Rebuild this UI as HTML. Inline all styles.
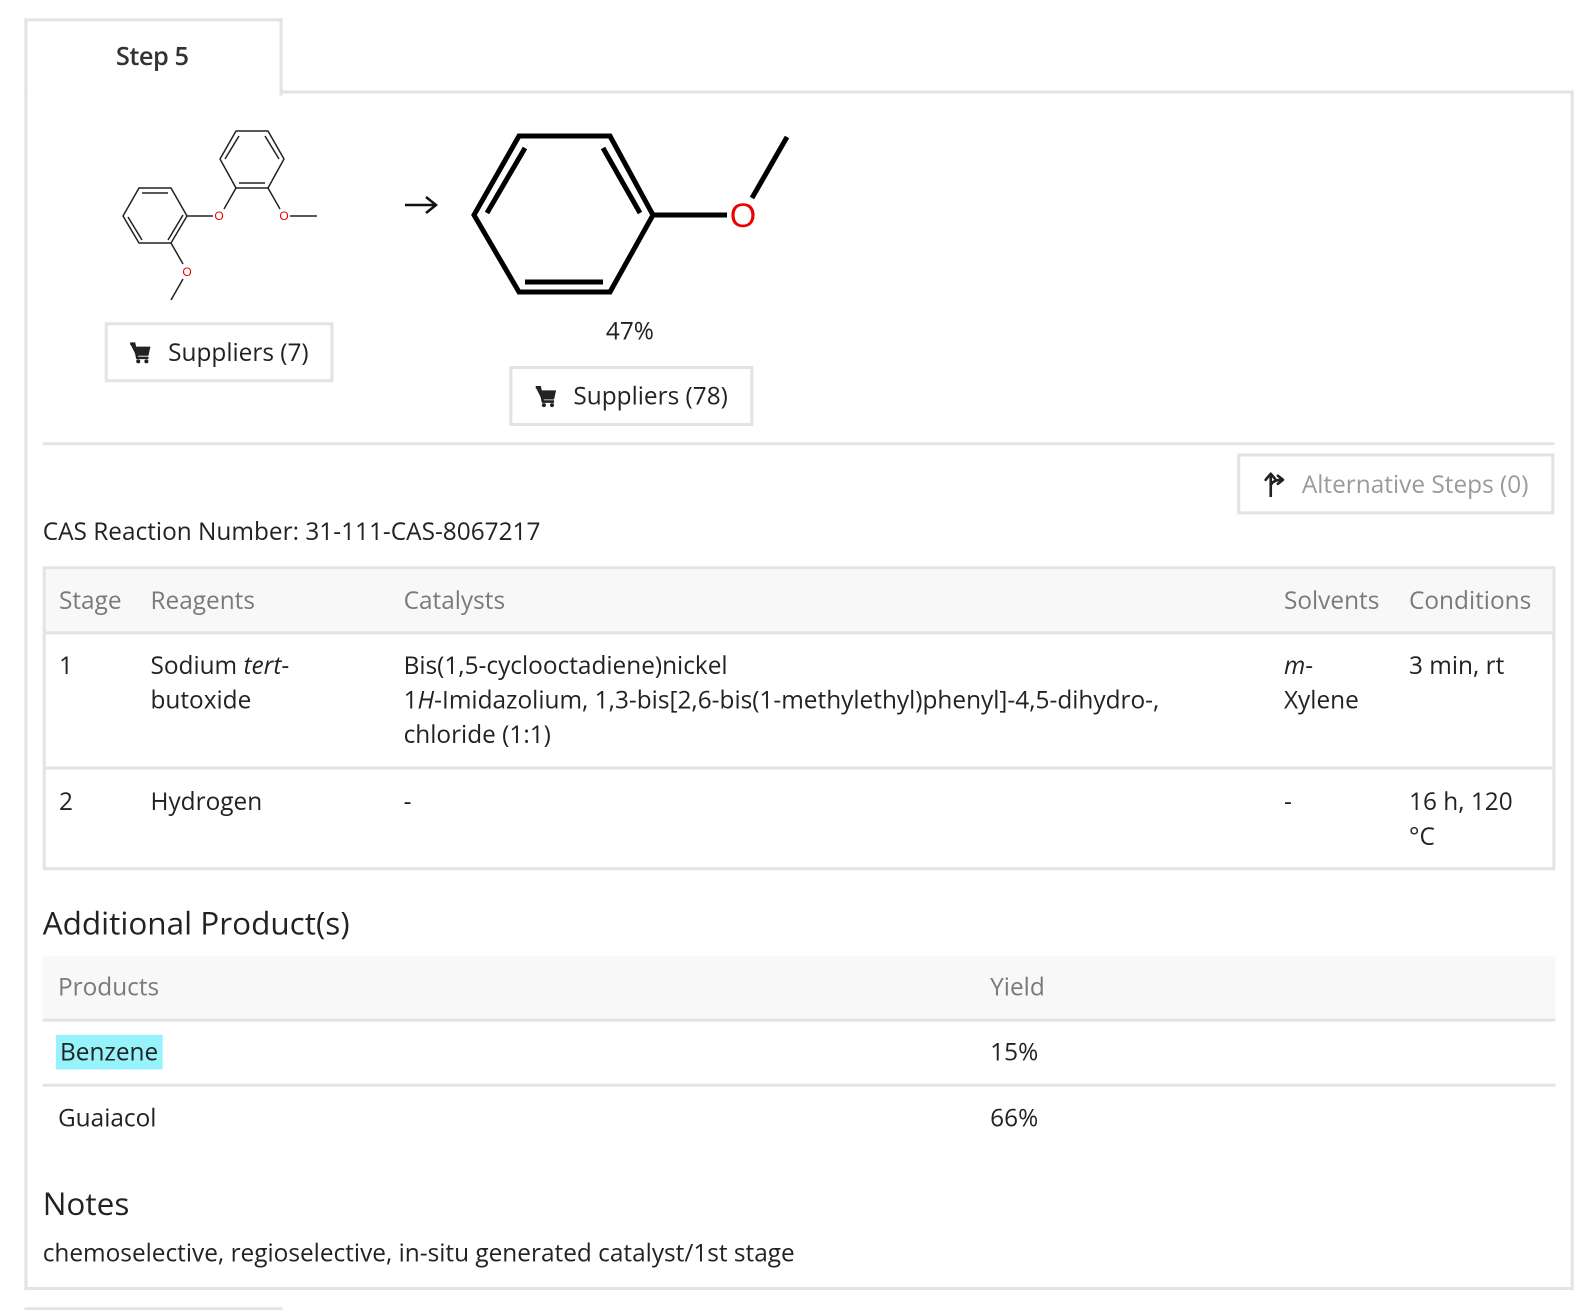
<!DOCTYPE html>
<html><head><meta charset="utf-8"><style>
*{margin:0;padding:0;box-sizing:border-box}
body{width:1594px;height:1310px;background:#fff;overflow:hidden;position:relative;font-family:"Open Sans","Liberation Sans",sans-serif;color:#222}
#w{position:absolute;left:0;top:0;width:1568px;height:1289px;transform:scale(1.0166);transform-origin:0 0}
.a{position:absolute;white-space:nowrap}
.t{font-size:24px;line-height:34px}
.g{color:#7a7a7a}
.b{position:absolute;border:3px solid #e3e3e3}
.btn{position:absolute;border:3px solid #e3e3e3;font-size:24px;display:flex;align-items:center;justify-content:center;gap:16px;background:#fff}
</style></head><body>
<div id="w">
<div class="b" style="left:24px;top:18px;width:254px;height:76px;border-bottom:none"></div>
<div class="b" style="left:24px;top:89px;width:1524px;height:1180px;border-top:none"></div>
<div class="a" style="left:276px;top:89px;width:1272px;height:3px;background:#e3e3e3"></div>
<div class="a" style="left:27px;top:88px;width:248px;height:6px;background:#fff"></div>
<div class="a" style="left:114px;top:38px;font-size:25px;font-weight:600;letter-spacing:-0.5px;color:#333">Step 5</div>

<div class="a t" style="left:596px;top:309px">47%</div>
<div class="btn" style="left:103px;top:317px;width:225px;height:59px"><svg width="22" height="22" viewBox="0 0 22 22"><path d="M1 2h4l1 3h15l-2 9H7z" fill="#222"/><path d="M1 2h4l3 14h11" stroke="#222" stroke-width="2.5" fill="none"/><circle cx="9" cy="19.5" r="2" fill="#222"/><circle cx="17" cy="19.5" r="2" fill="#222"/></svg>Suppliers (7)</div>
<div class="btn" style="left:501px;top:360px;width:240px;height:59px"><svg width="22" height="22" viewBox="0 0 22 22"><path d="M1 2h4l1 3h15l-2 9H7z" fill="#222"/><path d="M1 2h4l3 14h11" stroke="#222" stroke-width="2.5" fill="none"/><circle cx="9" cy="19.5" r="2" fill="#222"/><circle cx="17" cy="19.5" r="2" fill="#222"/></svg>Suppliers (78)</div>

<div class="a" style="left:42px;top:435px;width:1487px;height:3px;background:#e3e3e3"></div>
<div class="btn g" style="left:1217px;top:446px;width:312px;height:60px;color:#9a9a9a"><svg width="22" height="26" viewBox="0 0 22 26"><path d="M7 25V4M2 9l5-6 5 6M7 14c2-4 6-5 11-5M14 5l5 4-5 4" stroke="#222" stroke-width="2.6" fill="none" stroke-linecap="round" stroke-linejoin="round"/></svg>Alternative Steps (0)</div>
<div class="a t" style="left:42px;top:506px">CAS Reaction Number: 31-111-CAS-8067217</div>

<div class="b" style="left:42px;top:557px;width:1488px;height:299px"></div>
<div class="a" style="left:45px;top:560px;width:1482px;height:62px;background:#f8f8f8"></div>
<div class="a" style="left:45px;top:621px;width:1482px;height:3px;background:#e3e3e3"></div>
<div class="a" style="left:45px;top:754px;width:1482px;height:3px;background:#e3e3e3"></div>
<div class="a t g" style="left:58px;top:574px">Stage</div>
<div class="a t g" style="left:148px;top:574px">Reagents</div>
<div class="a t g" style="left:397px;top:574px">Catalysts</div>
<div class="a t g" style="left:1263px;top:574px">Solvents</div>
<div class="a t g" style="left:1386px;top:574px">Conditions</div>
<div class="a t" style="left:58px;top:638px">1</div>
<div class="a t" style="left:148px;top:638px">Sodium <i>tert</i>-<br>butoxide</div>
<div class="a t" style="left:397px;top:638px">Bis(1,5-cyclooctadiene)nickel<br>1<i>H</i>-Imidazolium, 1,3-bis[2,6-bis(1-methylethyl)phenyl]-4,5-dihydro-,<br>chloride (1:1)</div>
<div class="a t" style="left:1263px;top:638px"><i>m</i>-<br>Xylene</div>
<div class="a t" style="left:1386px;top:638px">3 min, rt</div>
<div class="a t" style="left:58px;top:772px">2</div>
<div class="a t" style="left:148px;top:772px">Hydrogen</div>
<div class="a t" style="left:397px;top:772px">-</div>
<div class="a t" style="left:1263px;top:772px">-</div>
<div class="a t" style="left:1386px;top:772px">16 h, 120<br>°C</div>

<div class="a" style="left:42px;top:888px;font-size:31px;line-height:40px">Additional Product(s)</div>
<div class="a" style="left:42px;top:940px;width:1488px;height:62px;background:#f8f8f8"></div>
<div class="a" style="left:42px;top:1002px;width:1488px;height:3px;background:#e3e3e3"></div>
<div class="a" style="left:42px;top:1066px;width:1488px;height:3px;background:#e3e3e3"></div>
<div class="a t g" style="left:57px;top:954px">Products</div>
<div class="a t g" style="left:974px;top:954px">Yield</div>
<div class="a t" style="left:55px;top:1018px;background:#97f3fb;padding:0 4px">Benzene</div>
<div class="a t" style="left:974px;top:1018px">15%</div>
<div class="a t" style="left:57px;top:1083px">Guaiacol</div>
<div class="a t" style="left:974px;top:1083px">66%</div>

<div class="a" style="left:42px;top:1164px;font-size:31px;line-height:40px">Notes</div>
<div class="a t" style="left:42px;top:1216px">chemoselective, regioselective, in-situ generated catalyst/1st stage</div>
<div class="a" style="left:24px;top:1286px;width:254px;height:3px;background:#e3e3e3"></div>
</div>

<svg width="1594" height="1310" style="position:absolute;left:0;top:0">
<g stroke="#222" stroke-width="1.5" fill="none">
<polygon points="123,216 139,188 171,188 187,216 171,243 139,243"/>
<line x1="142" y1="193" x2="168" y2="193"/>
<line x1="128" y1="217" x2="142" y2="240"/>
<line x1="168" y1="240" x2="183" y2="215"/>
<line x1="187" y1="216" x2="213" y2="216"/>
<line x1="224" y1="209" x2="236" y2="188"/>
<polygon points="236,188 268,188 284,159 268,131 236,131 220,159"/>
<line x1="239" y1="183" x2="265" y2="183"/>
<line x1="239" y1="136" x2="225" y2="159"/>
<line x1="265" y1="136" x2="279" y2="159"/>
<line x1="268" y1="188" x2="280" y2="209"/>
<line x1="290" y1="216" x2="317" y2="216"/>
<line x1="171" y1="243" x2="183" y2="264"/>
<line x1="183" y1="279" x2="171" y2="300"/>
</g>
<g fill="#e00" font-family="Liberation Sans,sans-serif" font-size="12" text-anchor="middle">
<text x="219" y="220">O</text><text x="284" y="220">O</text><text x="187" y="276">O</text>
</g>
<g stroke="#111" stroke-width="2.5"><line x1="405" y1="205" x2="435" y2="205"/><polyline points="426,197 436,205 426,213" fill="none"/></g>
<g stroke="#000" stroke-width="5" fill="none" stroke-linejoin="miter">
<polygon points="474,215 519,136 610,136 653,215 610,292 519,292"/>
<line x1="487" y1="213" x2="525" y2="148"/>
<line x1="603" y1="148" x2="640" y2="213"/>
<line x1="525" y1="282" x2="603" y2="282"/>
<line x1="653" y1="215" x2="727" y2="215"/>
<line x1="752" y1="198" x2="787" y2="137"/>
</g>
<text x="743" y="227" fill="#e00" font-family="Liberation Sans,sans-serif" font-size="34" text-anchor="middle">O</text>
</svg>
</body></html>
